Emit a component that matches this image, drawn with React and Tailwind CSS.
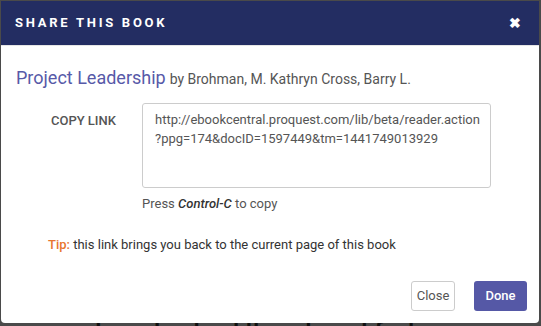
export default function App() {
  return (
    <div className="relative h-[326px] w-[541px] overflow-hidden bg-[#4a4a4a] font-['Roboto',sans-serif]">
      {/* page text peeking under the modal */}
      <div className="absolute left-[95px] top-[314px] text-[22px] font-bold tracking-wide text-[#111]">
        to understand the relevant factors
      </div>

      <div className="relative ml-px mt-px flex h-[322px] w-[538px] flex-col overflow-hidden rounded-b-[4px] bg-white">
        <div className="flex h-[45px] shrink-0 items-center justify-between border-b border-[#e5e5e5] bg-[#232d62] pl-[14px] pr-[18px]">
          <h2 className="text-[13px] font-bold uppercase tracking-[0.21em] text-white">Share this book</h2>
          <button type="button" className="text-[14px] font-bold leading-none text-white">✖</button>
        </div>

        <div className="px-[15px] pt-[21px]">
          <p className="leading-[22px]">
            <span className="text-[18px] text-[#5759a8]">Project Leadership</span>{' '}
            <span className="text-[14px] text-[#555]">by Brohman, M. Kathryn Cross, Barry L.</span>
          </p>
        </div>

        <div className="mt-[13px] flex">
          <label className="w-[141px] shrink-0 pr-[26px] pt-[8px] text-right text-[13px] font-medium text-[#555]">
            COPY LINK
          </label>
          <div>
            <div className="h-[85px] w-[349px] rounded-[3px] border border-[#ccc] px-[12px] pt-[6px] text-[13px] leading-[19px] text-[#555]">
              http://ebookcentral.proquest.com/lib/beta/reader.action
              <br />
              ?ppg=174&amp;docID=1597449&amp;tm=1441749013929
            </div>
            <p className="mt-[6px] text-[13px] text-[#555]">
              Press <em className="font-medium text-[#333]">Control-C</em> to copy
            </p>
          </div>
        </div>

        <p className="mt-[21px] pl-[47px] text-[13px] text-[#333]">
          <span className="font-medium text-[#e8742e]">Tip:</span> this link brings you back to the current page of this book
        </p>

        <div className="mt-auto flex justify-end gap-[19px] pb-[12px] pr-[12px]">
          <button type="button" className="h-[30px] w-[44px] rounded-[3px] border border-[#ccc] bg-white text-[13px] text-[#555]">
            Close
          </button>
          <button type="button" className="h-[30px] w-[53px] rounded-[3px] bg-[#5558a6] text-[13px] font-medium text-white">
            Done
          </button>
        </div>
      </div>
    </div>
  )
}
